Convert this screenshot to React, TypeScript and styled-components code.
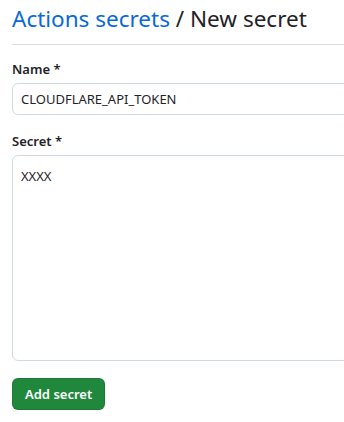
import styled, { createGlobalStyle } from "styled-components";

const GlobalStyle = createGlobalStyle`
  html, body {
    margin: 0;
    padding: 0;
    background: #ffffff;
    overflow: hidden;
  }
  body {
    font-family: "Noto Sans", "Liberation Sans", sans-serif;
    color: #1f2328;
  }
`;

const Page = styled.div`
  width: 460px;
  padding: 0 12px;
`;

const Subhead = styled.div`
  height: 43px;
  padding-top: 1px;
  border-bottom: 1px solid #d8dee4;
  margin-bottom: 14px;
`;

const Heading = styled.h2`
  margin: 0;
  font-size: 22.5px;
  font-weight: 400;
  line-height: 36px;
  color: #1f2328;
`;

const Crumb = styled.a`
  color: #0969da;
  text-decoration: none;
`;

const Form = styled.form`
  display: flex;
  flex-direction: column;
  gap: 16px;
`;

const Field = styled.div`
  display: flex;
  flex-direction: column;
  gap: 4px;
`;

const Label = styled.label`
  font-size: 13px;
  font-weight: 600;
  line-height: 20px;
  color: #1f2328;
`;

const TextInput = styled.input`
  box-sizing: border-box;
  width: 100%;
  height: 32px;
  padding: 5px 8px;
  font-family: inherit;
  font-size: 13px;
  line-height: 20px;
  color: #1f2328;
  border: 1px solid #d1d9e0;
  border-radius: 6px;
  outline: none;
`;

const TextArea = styled.textarea`
  box-sizing: border-box;
  width: 100%;
  height: 206px;
  padding: 10px 8px;
  font-family: inherit;
  font-size: 13px;
  line-height: 20px;
  color: #1f2328;
  border: 1px solid #d1d9e0;
  border-radius: 6px;
  resize: none;
  outline: none;
`;

const SubmitButton = styled.button`
  align-self: flex-start;
  height: 32px;
  margin-top: 1px;
  padding: 0 12px;
  font-family: inherit;
  font-size: 13px;
  font-weight: 600;
  color: #ffffff;
  background: #1f883d;
  border: 1px solid rgba(31, 35, 40, 0.15);
  border-radius: 6px;
  cursor: pointer;
`;

export default function App() {
  return (
    <>
      <GlobalStyle />
      <Page>
        <Subhead>
          <Heading>
            <Crumb href="#">Actions secrets</Crumb> / New secret
          </Heading>
        </Subhead>
        <Form onSubmit={(e) => e.preventDefault()}>
          <Field>
            <Label htmlFor="name">Name *</Label>
            <TextInput id="name" defaultValue="CLOUDFLARE_API_TOKEN" />
          </Field>
          <Field>
            <Label htmlFor="secret">Secret *</Label>
            <TextArea id="secret" defaultValue="XXXX" />
          </Field>
          <SubmitButton type="submit">Add secret</SubmitButton>
        </Form>
      </Page>
    </>
  );
}
